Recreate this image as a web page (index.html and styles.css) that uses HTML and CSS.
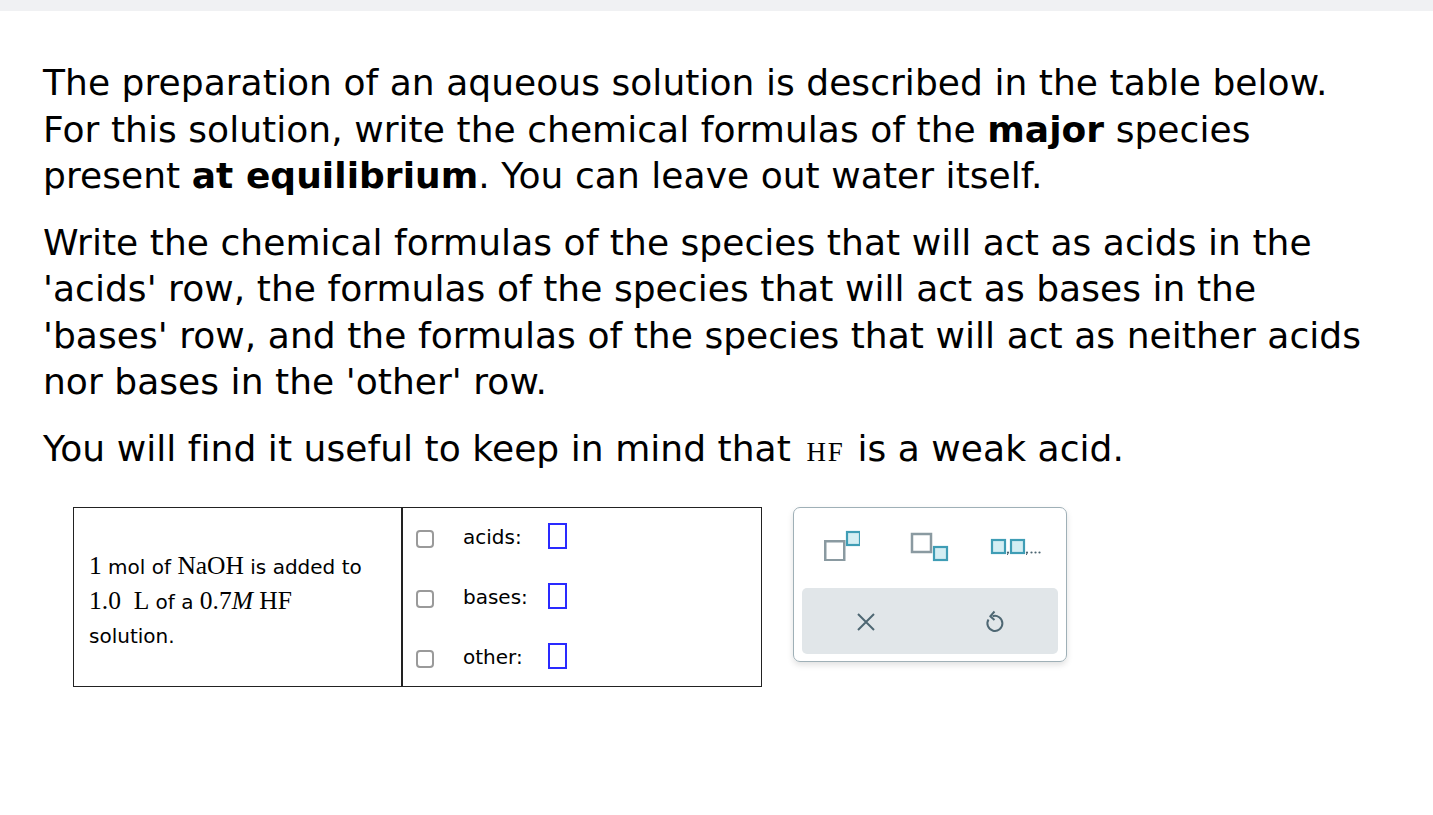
FILE: index.html
```html
<!DOCTYPE html>
<html>
<head>
<meta charset="utf-8">
<link rel="stylesheet" href="styles.css">
</head>
<body>
<div class="topbar"></div>
<main class="content">
  <p class="para">The preparation of an aqueous solution is described in the table below. For this solution, write the chemical formulas of the <b>major</b> species present <b>at equilibrium</b>. You can leave out water itself.</p>
  <p class="para">Write the chemical formulas of the species that will act as acids in the 'acids' row, the formulas of the species that will act as bases in the 'bases' row, and the formulas of the species that will act as neither acids nor bases in the 'other' row.</p>
  <p class="para">You will find it useful to keep in mind that <span class="math-sc">HF</span> is a weak acid.</p>

  <div class="work">
    <div class="qtable">
      <div class="desc">
        <div class="desc-text"><span class="m">1</span> mol of <span class="m">NaOH</span> is added to<br><span class="m">1.0&nbsp; L</span> of a <span class="m">0.7<i>M</i> HF</span><br>solution.</div>
      </div>
      <div class="answers">
        <div class="arow"><span class="chk"></span><span class="lab">acids:</span><span class="slot"></span></div>
        <div class="arow"><span class="chk"></span><span class="lab">bases:</span><span class="slot"></span></div>
        <div class="arow"><span class="chk"></span><span class="lab">other:</span><span class="slot"></span></div>
      </div>
    </div>

    <div class="palette">
      <div class="tools">
        <svg class="ico ico-sup" width="40" height="34" viewBox="0 0 40 34">
          <rect x="5.25" y="14.25" width="19" height="19" fill="#fff" stroke="#8a9aa1" stroke-width="2.5"/>
          <rect x="27" y="5" width="13" height="13" fill="#d4eef3" stroke="#3f9db5" stroke-width="2.2"/>
        </svg>
        <svg class="ico ico-sub" width="40" height="34" viewBox="0 0 40 34">
          <rect x="2" y="2" width="19" height="18" fill="#fff" stroke="#8a9aa1" stroke-width="2.5"/>
          <rect x="24" y="15" width="13" height="13" fill="#d4eef3" stroke="#3f9db5" stroke-width="2.2"/>
        </svg>
        <svg class="ico ico-list" width="56" height="34" viewBox="0 0 56 34">
          <rect x="2" y="10" width="13" height="13" fill="#d4eef3" stroke="#3f9db5" stroke-width="2.2"/>
          <circle cx="18" cy="22.5" r="1.1" fill="#4a6470"/>
          <path d="M18.2 22.5 L17.4 25" stroke="#4a6470" stroke-width="1"/>
          <rect x="21" y="10" width="13" height="13" fill="#d4eef3" stroke="#3f9db5" stroke-width="2.2"/>
          <circle cx="37" cy="22.5" r="1.1" fill="#4a6470"/>
          <path d="M37.2 22.5 L36.4 25" stroke="#4a6470" stroke-width="1"/>
          <circle cx="41.5" cy="22.5" r="1.1" fill="#4a6470"/>
          <circle cx="45.5" cy="22.5" r="1.1" fill="#4a6470"/>
          <circle cx="49.5" cy="22.5" r="1.1" fill="#4a6470"/>
        </svg>
      </div>
      <div class="actions">
        <svg width="20" height="20" viewBox="0 0 20 20">
          <path d="M2 2 L18 18 M18 2 L2 18" stroke="#4e6773" stroke-width="2" fill="none"/>
        </svg>
        <svg width="22" height="24" viewBox="0 0 22 24">
          <path d="M5.5 9.5 A7.5 7.5 0 1 0 9.5 6.3" stroke="#4e6773" stroke-width="2" fill="none"/>
          <path d="M11.5 1.5 L7.2 6.3 L11.5 10" stroke="#4e6773" stroke-width="2" fill="none" stroke-linejoin="round"/>
        </svg>
      </div>
    </div>
  </div>
</main>
</body>
</html>
```

FILE: styles.css
```css
html, body {
  margin: 0;
  padding: 0;
  background: #fff;
}
body {
  font-family: Verdana, "DejaVu Sans", sans-serif;
  color: #000;
}
.topbar {
  height: 11px;
  background: #f0f1f3;
}
.content {
  padding: 49px 0 0 43px;
  width: 1332px;
}
.para {
  margin: 0 0 20px 0;
  font-size: 36px;
  line-height: 46.5px;
  letter-spacing: 0.05px;
}
.math-sc {
  font-family: "Liberation Serif", "Times New Roman", serif;
  font-size: 27px;
  letter-spacing: 2px;
  margin: 0 1px 0 4px;
}
.work {
  display: flex;
  align-items: flex-start;
  gap: 31px;
  margin-left: 30px;
  margin-top: 32px;
}
.qtable {
  display: flex;
  border: 1px solid #222;
  height: 178px;
}
.desc {
  width: 312px;
  padding-left: 15px;
  border-right: 2px solid #222;
  display: flex;
  align-items: center;
}
.desc-text {
  font-size: 20px;
  line-height: 34px;
  padding-top: 8px;
}
.m {
  font-family: "Liberation Serif", "Times New Roman", serif;
  font-size: 25.5px;
}
.m i {
  font-style: italic;
}
.answers {
  width: 345px;
  padding: 17px 0 0 13px;
  display: flex;
  flex-direction: column;
  gap: 36px;
}
.arow {
  display: flex;
  align-items: center;
  height: 24px;
}
.chk {
  width: 14px;
  height: 14px;
  border: 2px solid #9a9a9a;
  border-radius: 4px;
  margin-top: 4px;
}
.lab {
  font-size: 20px;
  margin-left: 29px;
  width: 85px;
}
.slot {
  width: 15px;
  height: 22px;
  border: 2px solid #2a2aff;
  margin-top: -3px;
}
.palette {
  width: 274px;
  height: 155px;
  border: 1px solid #9fb0b7;
  border-radius: 7px;
  box-shadow: 0 3px 6px rgba(0, 0, 0, 0.12);
  padding: 0 8px 7px 8px;
  box-sizing: border-box;
  display: flex;
  flex-direction: column;
  justify-content: space-between;
}
.tools {
  display: flex;
  align-items: flex-start;
  padding: 19px 0 0 18px;
}
.ico {
  display: block;
  flex: none;
}
.ico-sub {
  margin-left: 50px;
  margin-top: 5px;
}
.ico-list {
  margin-left: 40px;
  margin-top: 3px;
}
.actions {
  height: 66px;
  background: #e1e6e9;
  border-radius: 5px;
  display: flex;
  justify-content: space-around;
  align-items: center;
  padding-top: 2px;
  box-sizing: border-box;
}
```
